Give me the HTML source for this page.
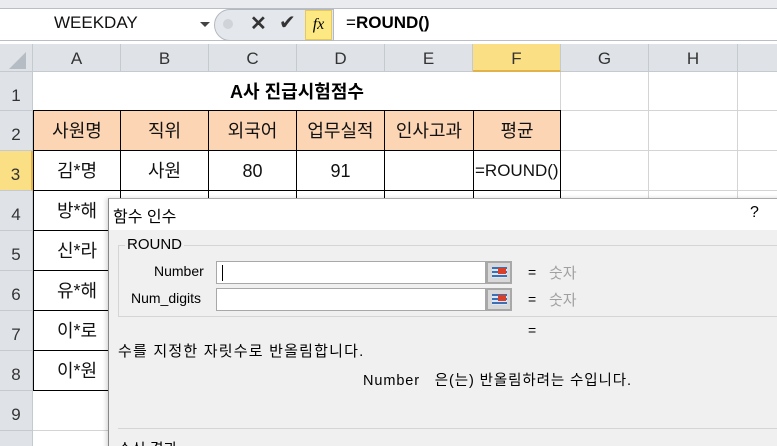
<!DOCTYPE html>
<html><head><meta charset="utf-8"><style>
*{margin:0;padding:0;box-sizing:border-box}
html,body{width:777px;height:446px;overflow:hidden}
body{background:#fff;position:relative;font-family:"Liberation Sans","Noto Sans CJK KR",sans-serif;}
.a{position:absolute}
.ch{position:absolute;top:44px;height:28px;background:#dfe3e8;border-right:1px solid #c5cad1;border-bottom:1px solid #c5cad1;font-size:17px;color:#333;text-align:center;line-height:29px}
.rh{position:absolute;left:0;width:33px;background:#dfe3e8;border-bottom:1px solid #c5cad1;border-right:1px solid #c5cad1;font-size:17px;color:#333;text-align:center;padding-top:14px}
.c{position:absolute;height:41px;border:1px solid #000;font-size:18px;text-align:center;line-height:40px;color:#111}
.h{background:#fcd5b4}
.gv{position:absolute;top:72px;width:1px;height:374px;background:#d4d4d4}
.gh{position:absolute;left:33px;width:744px;height:1px;background:#d4d4d4}
.d{font-family:"Liberation Sans","Noto Sans CJK KR",sans-serif;font-size:14px;color:#000;white-space:nowrap}
.inp{position:absolute;height:23px;background:#fff;border:1px solid #a8a8a8}
.btn{position:absolute;width:26px;height:23px;background:#d8d8d8;border:2px solid #a8a8a8}
.btn i{position:absolute;left:4px;top:4px;width:15px;height:11px;background:repeating-linear-gradient(#3c6fb4 0 2px,#dce6f4 2px 4px)}
.btn b{position:absolute;left:10px;top:5px;width:8px;height:6px;background:#d8402a}
</style></head><body>
<div class="a" style="left:0;top:0;width:777px;height:9px;background:#e9ebee;border-bottom:1px solid #b9bec6"></div>
<div class="a" style="left:0;top:9px;width:777px;height:32px;background:#fff;border-bottom:1px solid #b9bec6"></div>
<div class="a" style="left:54px;top:13px;font-size:17px;color:#111">WEEKDAY</div>
<div class="a" style="left:200px;top:22px;width:0;height:0;border-left:5px solid transparent;border-right:5px solid transparent;border-top:5px solid #444"></div>
<div class="a" style="left:214px;top:9px;width:120px;height:32px;background:#e4e7eb;border:1px solid #b4b9c0;border-radius:16px 0 0 16px"></div>
<div class="a" style="left:223px;top:19px;width:10px;height:10px;border-radius:5px;background:#d0d3d7"></div>
<div class="a" style="left:250px;top:11px;font-size:20px;color:#333;font-weight:bold">✕</div>
<div class="a" style="left:279px;top:10px;font-size:20px;color:#333">✔</div>
<div class="a" style="left:305px;top:10px;width:27px;height:30px;background:#fde983;border:1px solid #e8c85a;font-family:'Liberation Serif',serif;font-style:italic;font-size:16px;text-align:center;line-height:28px">fx</div>
<div class="a" style="left:346px;top:13px;font-size:17px;color:#000"><span>=</span><b>ROUND()</b></div>
<div class="a" style="left:0;top:44px;width:33px;height:28px;background:#dfe3e8;border-right:1px solid #c5cad1;border-bottom:1px solid #c5cad1"></div>
<div class="a" style="left:9px;top:52px;width:0;height:0;border-left:17px solid transparent;border-bottom:17px solid #b6bcc4"></div>
<div class="ch" style="left:33px;width:88px">A</div>
<div class="ch" style="left:121px;width:88px">B</div>
<div class="ch" style="left:209px;width:88px">C</div>
<div class="ch" style="left:297px;width:88px">D</div>
<div class="ch" style="left:385px;width:88px">E</div>
<div class="ch" style="left:473px;width:88px;background:#fbdf84;border-bottom:2px solid #e2b34c">F</div>
<div class="ch" style="left:561px;width:88px">G</div>
<div class="ch" style="left:649px;width:89px">H</div>
<div class="ch" style="left:738px;width:40px"></div>
<div class="gv" style="left:560px"></div><div class="gv" style="left:648px"></div><div class="gv" style="left:737px"></div>
<div class="gh" style="top:110px"></div><div class="gh" style="top:150px"></div><div class="gh" style="top:190px"></div>
<div class="gh" style="top:390px"></div><div class="gh" style="top:430px"></div>
<div class="rh" style="top:72px;height:39px">1</div>
<div class="rh" style="top:111px;height:40px">2</div>
<div class="rh" style="top:151px;height:40px;background:#fbdf84;border-right:2px solid #e2b34c">3</div>
<div class="rh" style="top:191px;height:40px">4</div>
<div class="rh" style="top:231px;height:40px">5</div>
<div class="rh" style="top:271px;height:40px">6</div>
<div class="rh" style="top:311px;height:40px">7</div>
<div class="rh" style="top:351px;height:40px">8</div>
<div class="rh" style="top:391px;height:40px">9</div>
<div class="rh" style="top:431px;height:40px">10</div>
<div class="a" style="left:33px;top:78px;width:528px;text-align:center;font-size:18px;font-weight:bold">A사 진급시험점수</div>
<div class="c h" style="left:33px;top:110px;width:88px">사원명</div>
<div class="c h" style="left:120px;top:110px;width:89px">직위</div>
<div class="c h" style="left:208px;top:110px;width:89px">외국어</div>
<div class="c h" style="left:296px;top:110px;width:89px">업무실적</div>
<div class="c h" style="left:384px;top:110px;width:90px">인사고과</div>
<div class="c h" style="left:473px;top:110px;width:88px">평균</div>
<div class="c" style="left:33px;top:150px;width:88px">김*명</div>
<div class="c" style="left:120px;top:150px;width:89px">사원</div>
<div class="c" style="left:208px;top:150px;width:89px">80</div>
<div class="c" style="left:296px;top:150px;width:89px">91</div>
<div class="c" style="left:384px;top:150px;width:90px"></div>
<div class="c" style="left:473px;top:150px;width:88px;text-align:left;padding-left:1px;font-size:17px">=ROUND()</div>
<div class="c" style="left:33px;top:190px;width:88px">방*해</div>
<div class="c" style="left:120px;top:190px;width:89px"></div>
<div class="c" style="left:208px;top:190px;width:89px"></div>
<div class="c" style="left:296px;top:190px;width:89px"></div>
<div class="c" style="left:384px;top:190px;width:90px"></div>
<div class="c" style="left:473px;top:190px;width:88px"></div>
<div class="c" style="left:33px;top:230px;width:88px">신*라</div>
<div class="c" style="left:33px;top:270px;width:88px">유*해</div>
<div class="c" style="left:33px;top:310px;width:88px">이*로</div>
<div class="c" style="left:33px;top:350px;width:88px">이*원</div>
<div class="c" style="left:120px;top:230px;width:89px"></div>
<div class="c" style="left:120px;top:270px;width:89px"></div>
<div class="c" style="left:120px;top:310px;width:89px"></div>
<div class="c" style="left:120px;top:350px;width:89px"></div>
<div class="a" style="left:108px;top:198px;width:680px;height:260px;background:#f0f0f0;border-left:1px solid #888;border-top:1px solid #aaa;box-shadow:-2px 0 4px rgba(0,0,0,.15)"></div>
<div class="a" style="left:109px;top:199px;width:680px;height:31px;background:#fff"></div>
<div class="a d" style="left:113px;top:203px;font-size:16px">함수 인수</div>
<div class="a d" style="left:750px;top:204px;font-size:16px">?</div>
<div class="a" style="left:118px;top:245px;width:670px;height:72px;border:1px solid #d5d5d5"></div>
<div class="a d" style="left:125px;top:236px;background:#f0f0f0;padding:0 2px;font-size:15px">ROUND</div>
<div class="a d" style="left:154px;top:263px">Number</div>
<div class="a d" style="left:131px;top:290px">Num_digits</div>
<div class="inp" style="left:216px;top:261px;width:270px"><div class="a" style="left:5px;top:3px;width:1px;height:16px;background:#000"></div></div>
<div class="inp" style="left:216px;top:288px;width:270px"></div>
<div class="btn" style="left:486px;top:261px"><i></i><b></b></div>
<div class="btn" style="left:486px;top:288px"><i></i><b></b></div>
<div class="a d" style="left:528px;top:264px">=</div>
<div class="a d" style="left:549px;top:262px;color:#a0a0a0;font-size:15px">숫자</div>
<div class="a d" style="left:528px;top:291px">=</div>
<div class="a d" style="left:549px;top:289px;color:#a0a0a0;font-size:15px">숫자</div>
<div class="a d" style="left:528px;top:322px">=</div>
<div class="a d" style="left:118px;top:340px;font-size:15px;letter-spacing:1.2px">수를 지정한 자릿수로 반올림합니다.</div>
<div class="a d" style="left:363px;top:369px;font-size:14.5px;letter-spacing:0.9px">Number&nbsp;&nbsp;&nbsp;은(는) 반올림하려는 수입니다.</div>
<div class="a" style="left:118px;top:428px;width:670px;height:1px;background:#d5d5d5"></div>
<div class="a d" style="left:118px;top:438px;font-size:15px">수식 결과</div>
</body></html>
